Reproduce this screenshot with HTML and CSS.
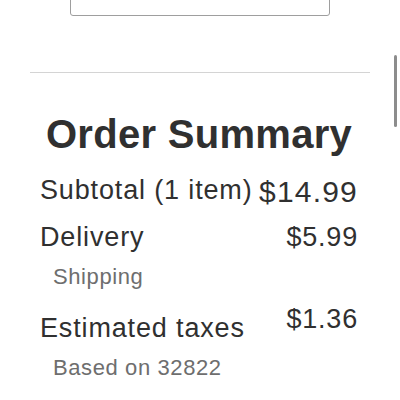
FILE: index.html
```html
<!DOCTYPE html>
<html lang="en">
<head>
<meta charset="utf-8">
<title>Order Summary</title>
<link rel="stylesheet" href="styles.css">
</head>
<body>
<div class="page">
  <button class="promo-btn" type="button">Apply promo code</button>
  <hr class="divider">
  <section class="summary">
    <h2 class="summary-title">Order Summary</h2>
    <div class="row row-subtotal">
      <div class="label">Subtotal (1 item)</div>
      <div class="price price-lg">$14.99</div>
    </div>
    <div class="row row-delivery">
      <div class="label-group">
        <div class="label">Delivery</div>
        <div class="sub">Shipping</div>
      </div>
      <div class="price">$5.99</div>
    </div>
    <div class="row row-taxes">
      <div class="label-group">
        <div class="label label-offset">Estimated taxes</div>
        <div class="sub">Based on 32822</div>
      </div>
      <div class="price">$1.36</div>
    </div>
  </section>
</div>
<div class="scroll-indicator"></div>
</body>
</html>
```
FILE: styles.css
```css
html, body {
  margin: 0;
  padding: 0;
  background: #ffffff;
}

body {
  font-family: "Liberation Sans", Arial, Helvetica, sans-serif;
  color: #333333;
  overflow: hidden;
}

.page {
  padding: 0 30px;
}

.promo-btn {
  display: flex;
  align-items: center;
  justify-content: center;
  width: 260px;
  height: 44px;
  margin: -28px auto 0;
  padding: 0 0 12px;
  background: #ffffff;
  border: 1px solid #9e9e9e;
  border-radius: 3px;
  font-family: inherit;
  font-size: 18px;
  color: #d6d6d6;
  line-height: 1;
  box-sizing: border-box;
}

.divider {
  margin: 56px 0 0;
  border: 0;
  height: 1px;
  background: #d4d4d4;
}

.summary {
  padding: 0 12px 0 10px;
}

.summary-title {
  margin: 38px 0 18px;
  font-size: 40px;
  line-height: 46px;
  font-weight: 700;
  letter-spacing: 0.3px;
  text-align: center;
  color: #303030;
}

.row {
  display: flex;
  justify-content: space-between;
  align-items: flex-start;
}

.row-delivery {
  margin-top: 13px;
}

.row-taxes {
  margin-top: 14px;
}

.label {
  font-size: 27px;
  letter-spacing: 0.85px;
  color: #303030;
  white-space: nowrap;
}

.label-offset {
  margin-top: 9px;
}

.sub {
  margin-top: 11px;
  padding-left: 13px;
  font-size: 22px;
  letter-spacing: 0.6px;
  color: #6e6e6e;
}

.price {
  font-size: 27px;
  letter-spacing: 0.8px;
  color: #303030;
  white-space: nowrap;
}

.price-lg {
  font-size: 30px;
  letter-spacing: 1.2px;
}

.scroll-indicator {
  position: fixed;
  top: 55px;
  right: 3px;
  width: 3px;
  height: 72px;
  border-radius: 2px;
  background: #8c8c8c;
}
```
